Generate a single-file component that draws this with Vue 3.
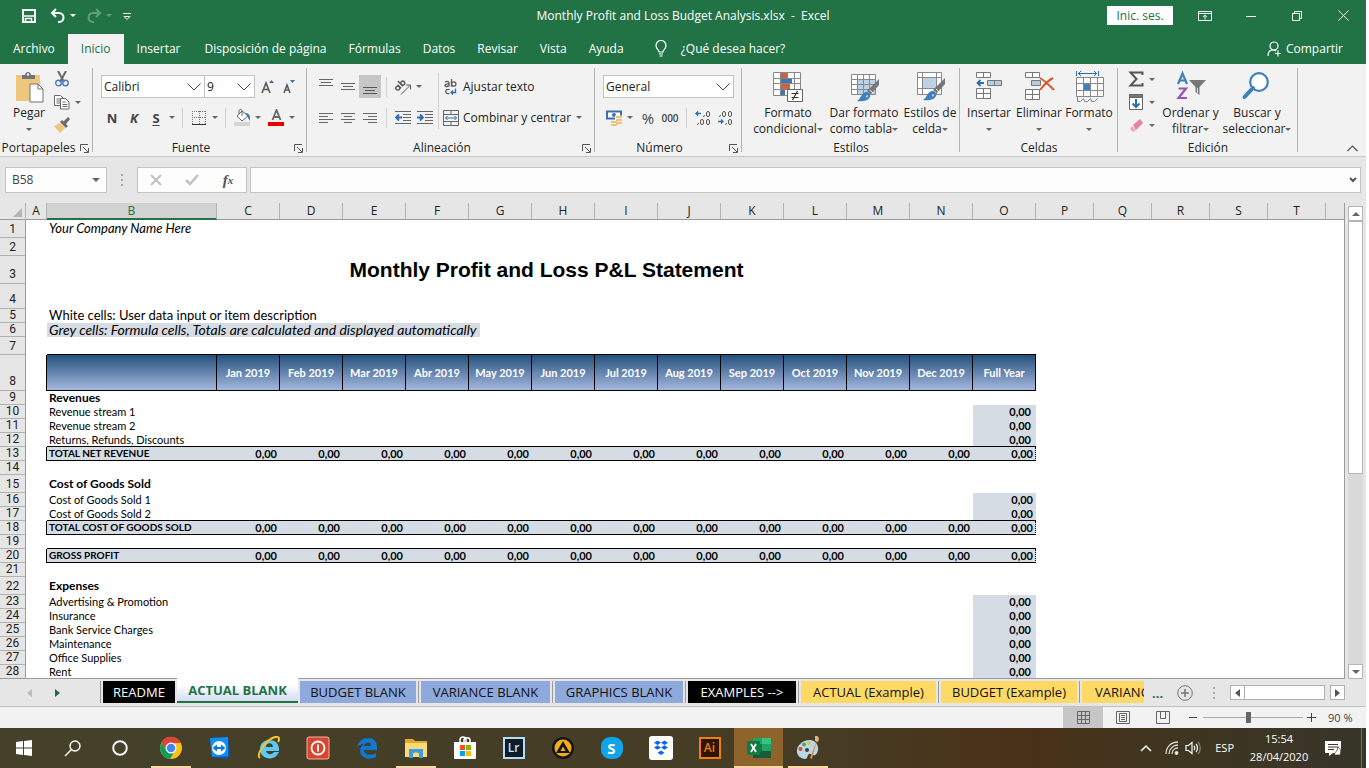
<script setup>
import { ref } from 'vue'

const tabs = ['Archivo', 'Inicio', 'Insertar', 'Disposición de página', 'Fórmulas', 'Datos', 'Revisar', 'Vista', 'Ayuda']
const months = ['Jan', 'Feb', 'Mar', 'Abr', 'May', 'Jun', 'Jul', 'Aug', 'Sep', 'Oct', 'Nov', 'Dec']
const columns = 'ABCDEFGHIJKLMNOPQRST'.split('')

const rows = [
  { n: 1, size: 'h18', kind: 'text', label: 'Your Company Name Here', cls: 'company' },
  { n: 2, size: 'h18' },
  { n: 3, size: 'h28', kind: 'title', label: 'Monthly Profit and Loss P&L Statement' },
  { n: 4, size: 'h25' },
  { n: 5, size: 'h14', kind: 'text', label: 'White cells: User data input or item description', cls: 'note' },
  { n: 6, size: 'h14', kind: 'text', label: 'Grey cells: Formula cells, Totals are calculated and displayed automatically', cls: 'note grey' },
  { n: 7, size: 'h18', kind: 'before' },
  { n: 8, size: 'h36', kind: 'months' },
  { n: 9, size: 'h14', kind: 'head', label: 'Revenues' },
  { n: 10, size: 'h14', kind: 'item', label: 'Revenue stream 1' },
  { n: 11, size: 'h14', kind: 'item', label: 'Revenue stream 2' },
  { n: 12, size: 'h14', kind: 'item', label: 'Returns, Refunds, Discounts', last: true },
  { n: 13, size: 'h14', kind: 'total', label: 'TOTAL NET REVENUE' },
  { n: 14, size: 'h14' },
  { n: 15, size: 'h18', kind: 'head', label: 'Cost of Goods Sold' },
  { n: 16, size: 'h14', kind: 'item', label: 'Cost of Goods Sold 1', wide: true },
  { n: 17, size: 'h14', kind: 'item', label: 'Cost of Goods Sold 2', wide: true, last: true },
  { n: 18, size: 'h14', kind: 'total', label: 'TOTAL COST OF GOODS SOLD' },
  { n: 19, size: 'h14', kind: 'before' },
  { n: 20, size: 'h14', kind: 'total', label: 'GROSS PROFIT' },
  { n: 21, size: 'h14' },
  { n: 22, size: 'h18', kind: 'head', label: 'Expenses' },
  { n: 23, size: 'h14', kind: 'item', label: 'Advertising & Promotion' },
  { n: 24, size: 'h14', kind: 'item', label: 'Insurance' },
  { n: 25, size: 'h14', kind: 'item', label: 'Bank Service Charges' },
  { n: 26, size: 'h14', kind: 'item', label: 'Maintenance' },
  { n: 27, size: 'h14', kind: 'item', label: 'Office Supplies' },
  { n: 28, size: 'h14', kind: 'item', label: 'Rent' }
]

const sheets = [
  { name: 'README', color: 'black', width: 72 },
  { name: 'ACTUAL BLANK', color: 'active', width: 121 },
  { name: 'BUDGET BLANK', color: 'blue', width: 116 },
  { name: 'VARIANCE BLANK', color: 'blue', width: 129 },
  { name: 'GRAPHICS BLANK', color: 'blue', width: 128 },
  { name: 'EXAMPLES -->', color: 'black', width: 108 },
  { name: 'ACTUAL (Example)', color: 'yellow', width: 135 },
  { name: 'BUDGET (Example)', color: 'yellow', width: 136 },
  { name: 'VARIANC', color: 'yellow cut', width: 62 }
]

const zoom = ref(45)
const formula = ref('')
const cellName = ref('B58')
</script>

<template>
  <div class="app">
    <header class="titlebar">
      <div class="quick">
        <button aria-label="Guardar"><svg width="16" height="16" viewBox="0 0 16 16" fill="none" stroke="#fff" stroke-width="2"><path d="M2 2h12v12H2z"/><path d="M3 8h10" stroke-width="1.500"/><path d="M4.500 14v-3.500h6V14" stroke-width="1.500"/></svg></button>
        <button aria-label="Deshacer" class="undo"><svg width="16" height="16" viewBox="0 0 16 16" fill="none" stroke="#fff" stroke-width="2"><path d="M6 1L2 5l4 4M2 5h7c6 0 6 9 0 9H8"/></svg><i class="caret light"></i></button>
        <button aria-label="Rehacer" class="undo dim"><svg width="16" height="16" viewBox="0 0 16 16" fill="none" stroke="#fff" stroke-width="2"><path d="M10 1l4 4-4 4M14 5H7c-6 0-6 9 0 9h1"/></svg><i class="caret light"></i></button>
        <button aria-label="Personalizar"><svg width="10" height="10" viewBox="0 0 10 10" fill="none" stroke="#fff"><path d="M1 2.500h8M2 5.500l3 3 3-3z"/></svg></button>
      </div>
      <h1>Monthly Profit and Loss Budget Analysis.xlsx&nbsp; -&nbsp; Excel</h1>
      <div class="window">
        <button class="signin">Inic. ses.</button>
        <button class="win" aria-label="Opciones de la cinta"><svg width="14" height="12" viewBox="0 0 14 12" fill="none" stroke="#fff"><path d="M.5 1.500h13v9H.5zM.5 3.500h13M7 9.500V5M5 7l2-2 2 2"/></svg></button>
        <button class="win" aria-label="Minimizar"><svg width="10" height="10" viewBox="0 0 10 10" stroke="#fff"><path d="M0 5.500h10"/></svg></button>
        <button class="win" aria-label="Restaurar"><svg width="10" height="10" viewBox="0 0 10 10" fill="none" stroke="#fff"><path d="M.5 2.500h7v7h-7zM2.500 2.500v-2h7v7h-2"/></svg></button>
        <button class="win" aria-label="Cerrar"><svg width="11" height="11" viewBox="0 0 11 11" stroke="#fff"><path d="M.5.5l10 10M10.500.5l-10 10"/></svg></button>
      </div>
    </header>

    <nav class="tabs">
      <button v-for="t in tabs" :key="t" :class="{ on: t === 'Inicio' }">{{ t }}</button>
      <button class="tell"><svg width="12" height="18" viewBox="0 0 12 18" fill="none" stroke="#fff" stroke-width="1.200"><path d="M4 12c0-2-3-3-3-6.500a5 5 0 0 1 10 0C11 9 8 10 8 12zM4 14h4M4.500 16h3"/></svg>¿Qué desea hacer?</button>
      <button class="share"><svg width="15" height="16" viewBox="0 0 15 16" fill="none" stroke="#fff" stroke-width="1.200"><circle cx="7" cy="5" r="4"/><path d="M1 15c0-4 2-6 5-6 1.500 0 2.500.5 3 1M11 9.500v6M8 12.500h6"/></svg>Compartir</button>
    </nav>

    <section class="ribbon">
      <div class="group g-clip">
        <div class="body">
          <button class="large paste">
            <svg width="30" height="32" viewBox="0 0 30 32"><path d="M2 4h24v26H2z" fill="#eec77c"/><path d="M8 8V4h3c0-4 6-4 6 0h4v4z" fill="#737373"/><circle cx="14" cy="3.500" r="1.200" fill="#f2f2f2"/><path d="M16 13h8l5 5v13H16z" fill="#fff" stroke="#737373"/><path d="M24 13v5h5" fill="none" stroke="#737373"/></svg>
            <span>Pegar</span><span><i class="caret"></i></span>
          </button>
          <div class="stack">
            <button aria-label="Cortar"><svg width="16" height="16" viewBox="0 0 16 16" fill="none"><path d="M4 0l6 11M12 0L6 11" stroke="#6a6a6a" stroke-width="2"/><circle cx="4.500" cy="12" r="2.800" stroke="#4a7ebb" stroke-width="1.400"/><circle cx="11.500" cy="12" r="2.800" stroke="#4a7ebb" stroke-width="1.400"/></svg></button>
            <button aria-label="Copiar"><svg width="16" height="16" viewBox="0 0 16 16" fill="#fff" stroke="#6a6a6a"><path d="M.5 1.500h6l3 3v7h-9zM2.500 5h4M2.500 7h4M2.500 9h4"/><path d="M6.500 4.500h5l3.500 3.500v7H6.500zM8.500 8h3M8.500 10.500h5M8.500 12.500h5"/></svg><i class="caret"></i></button>
            <button aria-label="Copiar formato"><svg width="16" height="16" viewBox="0 0 16 16"><path d="M0 9l6-3 5 5-5 5z" fill="#eec77c"/><path d="M6 5l2-2 6 6-2 2zM9 5l5-5 2 2-4 5z" fill="#6a6a6a"/></svg></button>
          </div>
        </div>
        <div class="label">Portapapeles<svg class="launch" width="9" height="9" viewBox="0 0 9 9" fill="none" stroke="#555"><path d="M.5 7V.5H8M3 3l5 5M8.500 4v4.500H4"/></svg></div>
      </div>

      <div class="group g-font">
        <div class="body col">
          <div class="row">
            <span class="pick face"><select aria-label="Fuente"><option>Calibri</option></select><svg width="14" height="8" viewBox="0 0 14 8" fill="none" stroke="#444"><path d="M.5.5L7 7 13.500.5"/></svg></span>
            <span class="pick size"><select aria-label="Tamaño"><option>9</option></select><svg width="14" height="8" viewBox="0 0 14 8" fill="none" stroke="#444"><path d="M.5.5L7 7 13.500.5"/></svg></span>
            <button class="t grow" aria-label="Aumentar tamaño"><svg width="14" height="16" viewBox="0 0 14 16"><path d="M1 14L5 4l4 10M2.500 10.500h5" fill="none" stroke="#595959" stroke-width="1.600"/><path d="M8 4l2.500-3L13 4z" fill="#3d6fae"/></svg></button>
            <button class="t" aria-label="Disminuir tamaño"><svg width="14" height="16" viewBox="0 0 14 16"><path d="M1 14l3-8 3 8M2 11h4" fill="none" stroke="#595959" stroke-width="1.500"/><path d="M7 1h5l-2.500 3z" fill="#3d6fae"/></svg></button>
          </div>
          <div class="row">
            <button class="t bold">N</button><button class="t ital">K</button><button class="t under">S</button><button class="c" aria-label="Subrayado"><i class="caret"></i></button>
            <i class="sep"></i>
            <button class="t" aria-label="Bordes"><svg width="14" height="14" viewBox="0 0 14 14" stroke="#777" stroke-dasharray="1 1"><path d="M0 .5h14M.5 0v13M7.500 0v13M13.500 0v13M0 6.500h14"/><path d="M0 13.500h14" stroke="#333" stroke-dasharray="none"/></svg></button><button class="c" aria-label="Más bordes"><i class="caret"></i></button>
            <i class="sep"></i>
            <button class="t" aria-label="Relleno"><svg width="17" height="17" viewBox="0 0 17 17"><path d="M8 2l6 5-6 5-5-5z" fill="#fff" stroke="#666"/><path d="M8 7V2c0-2-3-2-3 0v3" fill="none" stroke="#666"/><path d="M11 4c4 0 6 3 4.500 8-1-3-2-5-4.500-8z" fill="#3d6fae"/><path d="M0 13h16v4H0z" fill="#d4d4d4"/></svg></button><button class="c" aria-label="Más rellenos"><i class="caret"></i></button>
            <button class="t grow" aria-label="Color de fuente"><svg width="17" height="17" viewBox="0 0 17 17"><path d="M4.500 11L8.500 1l4 10M6 8h5" fill="none" stroke="#666" stroke-width="1.800"/><path d="M0 13h16v4H0z" fill="#e60000"/></svg></button><button class="c" aria-label="Más colores"><i class="caret"></i></button>
          </div>
        </div>
        <div class="label">Fuente<svg class="launch" width="9" height="9" viewBox="0 0 9 9" fill="none" stroke="#555"><path d="M.5 7V.5H8M3 3l5 5M8.500 4v4.500H4"/></svg></div>
      </div>

      <div class="group g-align">
        <div class="body">
          <div class="col">
            <div class="row">
              <button class="t" aria-label="Arriba"><svg width="14" height="16" viewBox="0 0 14 16" stroke="#666"><path d="M0 .5h14M2 3.500h10M0 6.500h14"/></svg></button>
              <button class="t" aria-label="Medio"><svg width="14" height="16" viewBox="0 0 14 16" stroke="#666"><path d="M0 4.500h14M2 7.500h10M0 10.500h14"/></svg></button>
              <button class="t sel" aria-label="Abajo"><svg width="14" height="16" viewBox="0 0 14 16" stroke="#555"><path d="M0 8.500h14M2 11.500h10M0 14.500h14"/></svg></button>
              <i class="sep"></i>
              <button class="t" aria-label="Orientación"><svg width="17" height="16" viewBox="0 0 17 16" fill="none" stroke="#595959"><g transform="rotate(-45 6 8)" stroke-width="1.400"><circle cx="3" cy="6.500" r="2"/><path d="M5.200 4V9M8 1.500V9"/><circle cx="10" cy="6.500" r="2"/></g><path d="M6 15.500L15 6.500M11 6h4.500v4.500"/></svg></button><button class="c" aria-label="Más orientación"><i class="caret"></i></button>
            </div>
            <div class="row">
              <button class="t" aria-label="Izquierda"><svg width="14" height="12" viewBox="0 0 14 12" stroke="#666"><path d="M0 1.500h14M0 4.500h9M0 7.500h14M0 10.500h9"/></svg></button>
              <button class="t" aria-label="Centro"><svg width="14" height="12" viewBox="0 0 14 12" stroke="#666"><path d="M0 1.500h14M3 4.500h8M0 7.500h14M3 10.500h8"/></svg></button>
              <button class="t" aria-label="Derecha"><svg width="14" height="12" viewBox="0 0 14 12" stroke="#666"><path d="M0 1.500h14M5 4.500h9M0 7.500h14M5 10.500h9"/></svg></button>
              <i class="sep"></i>
              <button class="t" aria-label="Disminuir sangría"><svg width="16" height="13" viewBox="0 0 16 13" fill="none" stroke="#666"><path d="M0 .5h16M8 3.500h8M8 6.500h8M8 9.500h8M0 12.500h16"/><path d="M7 6.500H1M4 3.500l-3 3 3 3" stroke="#2f6db3" stroke-width="1.800"/></svg></button>
              <button class="t" aria-label="Aumentar sangría"><svg width="16" height="13" viewBox="0 0 16 13" fill="none" stroke="#666"><path d="M0 .5h16M8 3.500h8M8 6.500h8M8 9.500h8M0 12.500h16"/><path d="M0 6.500h6M3 3.500l3 3-3 3" stroke="#2f6db3" stroke-width="1.800"/></svg></button>
            </div>
          </div>
          <i class="sep tall"></i>
          <div class="col">
            <div class="row">
              <button class="wide"><svg width="16" height="18" viewBox="0 0 16 18" fill="none" stroke="#595959" stroke-width="1.300"><path d="M2 4c2-1 4-.5 4 1v3.500M6 6C1 5.500 1 9 4 8.500c1 0 2-1 2-1M8.500 1v7.500"/><circle cx="10.700" cy="6" r="2.200"/><path d="M6.500 11.500c-5-1.500-5 5.500 0 4"/><path d="M12.500 10.500v4H8M10 12.500l-2 2 2 2" stroke="#2f6db3"/></svg>Ajustar texto</button>
            </div>
            <div class="row">
              <button class="wide"><svg width="16" height="16" viewBox="0 0 16 16" fill="none" stroke="#666"><path d="M.5.5h15v15H.5zM.5 4.500h15M.5 11.500h15M8 .5v4M8 11.500v4"/><path d="M2.500 8h11M4.500 6l-2 2 2 2M11.500 6l2 2-2 2" stroke="#2f6db3"/></svg>Combinar y centrar</button><button class="c" aria-label="Más opciones de combinar"><i class="caret"></i></button>
            </div>
          </div>
        </div>
        <div class="label">Alineación<svg class="launch" width="9" height="9" viewBox="0 0 9 9" fill="none" stroke="#555"><path d="M.5 7V.5H8M3 3l5 5M8.500 4v4.500H4"/></svg></div>
      </div>

      <div class="group g-num">
        <div class="body col">
          <div class="row">
            <span class="pick fmt"><select aria-label="Formato de número"><option>General</option></select><svg width="14" height="8" viewBox="0 0 14 8" fill="none" stroke="#444"><path d="M.5.5L7 7 13.500.5"/></svg></span>
          </div>
          <div class="row">
            <button class="t" aria-label="Moneda"><svg width="17" height="16" viewBox="0 0 17 16"><path d="M1 1.500h14v7H1z" fill="#fff" stroke="#3d6fae" stroke-width="2"/><circle cx="8" cy="5" r="2" fill="#3d6fae"/><path d="M9 5.500h8V16H4v-5h5z" fill="#f2f2f2"/><path d="M10 6h6v2h-6zM10 9h6v2h-6zM10 12h6v2h-6zM5 11h6v2H5zM5 14h6v2H5z" fill="#eec07c"/></svg></button><button class="c" aria-label="Más monedas"><i class="caret"></i></button>
            <button class="t pct">%</button><button class="t mil">000</button>
            <i class="sep"></i>
            <button class="t dec" aria-label="Aumentar decimales"><svg width="16" height="16" viewBox="0 0 16 16" fill="none" stroke="#595959"><path d="M6 3.500H1M3 1.500l-2 2 2 2" stroke="#2f6db3" stroke-width="1.400"/><path d="M9.500 5l-1 2M3.500 13l-1 2"/><rect x="11.500" y="1.500" width="3" height="5" rx="1.500"/><rect x="5.500" y="9.500" width="3" height="5" rx="1.500"/><rect x="11.500" y="9.500" width="3" height="5" rx="1.500"/></svg></button>
            <button class="t dec" aria-label="Disminuir decimales"><svg width="16" height="16" viewBox="0 0 16 16" fill="none" stroke="#595959"><path d="M1 11.500h5M4 9.500l2 2-2 2" stroke="#2f6db3" stroke-width="1.400"/><path d="M3.500 5l-1 2M9.500 13l-1 2"/><rect x="5.500" y="1.500" width="3" height="5" rx="1.500"/><rect x="11.500" y="1.500" width="3" height="5" rx="1.500"/><rect x="11.500" y="9.500" width="3" height="5" rx="1.500"/></svg></button>
          </div>
        </div>
        <div class="label">Número<svg class="launch" width="9" height="9" viewBox="0 0 9 9" fill="none" stroke="#555"><path d="M.5 7V.5H8M3 3l5 5M8.500 4v4.500H4"/></svg></div>
      </div>

      <div class="group g-style">
        <div class="body">
          <button class="large"><svg width="32" height="32" viewBox="0 0 32 32"><path d="M1.500 1.500h27v23h-27z" fill="#fff"/><path d="M9 1.500h7v5.500H9zM9 13h9v5H9z" fill="#d2603f"/><path d="M9 7.500h11v5H9zM9 18.500h4v6H9z" fill="#3f76b5"/><path d="M1.500 1.500h27v23h-27zM8.500 1.500v23M15.500 1.500v5M22.500 1.500v17M1.500 7.500h27M1.500 12.500h27M1.500 18.500h27" fill="none" stroke="#888"/><path d="M15.500 18.500h15v12h-15z" fill="#fff" stroke="#666"/><path d="M19.500 22.500h7M19.500 26.500h7M25.500 20l-5 9" stroke="#333" stroke-width="1.200"/></svg><span>Formato</span><span>condicional<i class="caret"></i></span></button>
          <button class="large"><svg width="32" height="32" viewBox="0 0 32 32"><path d="M3.500 3.500h24v20h-24z" fill="#fff"/><path d="M9.500 8.500h18v15h-18z" fill="#bdd0e6"/><path d="M3.500 3.500h24v20h-24zM9.500 3.500v20M15.500 3.500v20M21.500 3.500v20M3.500 8.500h24M3.500 13.500h24M3.500 18.500h24" fill="none" stroke="#888"/><path d="M31 8v6L23 23l-4-3z" fill="#777"/><path d="M22 19l3 3" stroke="#fff"/><path d="M18 21c3 0 5 2 4 5-2 4-7 5-13 4 4-2 4-8 9-9z" fill="#3f7fbd"/><path d="M18 25l2-1-1 3z" fill="#fff"/></svg><span>Dar formato</span><span>como tabla<i class="caret"></i></span></button>
          <button class="large"><svg width="32" height="32" viewBox="0 0 32 32"><path d="M3.500 1.500h24v22h-24z" fill="#fff"/><path d="M8.500 6.500h14v11h-14z" fill="#bdd0e6"/><path d="M3.500 1.500h24v22h-24zM8.500 1.500v22M22.500 1.500v22M3.500 6.500h24M3.500 17.500h24" fill="none" stroke="#888"/><path d="M31 7v6L23 22l-4-3z" fill="#777"/><path d="M22 18l3 3" stroke="#fff"/><path d="M18 20c3 0 5 2 4 5-2 4-7 5-13 4 4-2 4-8 9-9z" fill="#3f7fbd"/><path d="M18 24l2-1-1 3z" fill="#fff"/></svg><span>Estilos de</span><span>celda<i class="caret"></i></span></button>
        </div>
        <div class="label">Estilos</div>
      </div>

      <div class="group g-cells">
        <div class="body">
          <button class="large"><svg width="32" height="32" viewBox="0 0 32 32" stroke="#777" fill="#fff"><path d="M3.500 1.500h14v5h-14zM10.500 1.500v5M3.500 17.500h14v10h-14zM10.500 17.500v10M3.500 22.500h14"/><path d="M14.500 9.500h14v5h-14zM21.500 9.500v5" fill="#b7cde0"/><path d="M11 12H5M7.500 9L4.500 12l3 3" fill="none" stroke="#2f6db3" stroke-width="1.800"/></svg><span>Insertar</span><span><i class="caret"></i></span></button>
          <button class="large"><svg width="32" height="32" viewBox="0 0 32 32" stroke="#777" fill="#fff"><path d="M2.500 1.500h14v5h-14zM9.500 1.500v5M2.500 18.500h14v10h-14zM9.500 18.500v10M2.500 23.500h14"/><path d="M8.500 9.500h9v5h-9z" fill="#b7cde0"/><path d="M17 7c5 3 10 8 14 12M30 7c-4 2-9 7-13 12" fill="none" stroke="#d9532c" stroke-width="2"/></svg><span>Eliminar</span><span><i class="caret"></i></span></button>
          <button class="large"><svg width="32" height="32" viewBox="0 0 32 32" stroke="#888" fill="#fff"><path d="M3.500 6.500h27v19h-27z"/><path d="M10.500 12.500h7v7h-7z" fill="#3f7fbd"/><path d="M10.500 6.500v19M17.500 6.500v19M24.500 6.500v19M3.500 12.500h27M3.500 19.500h27M4.500 25.500v5h3l3-3 1 3h3l3-3 1 3h3l3-3" fill="none"/><path d="M3.500 0v5M25.500 0v5M5 2.500h19M8 0L5.500 2.500 8 5M21 0l2.500 2.500L21 5" fill="none" stroke="#2f6db3"/></svg><span>Formato</span><span><i class="caret"></i></span></button>
        </div>
        <div class="label">Celdas</div>
      </div>

      <div class="group g-edit">
        <div class="body">
          <div class="stack">
            <button aria-label="Autosuma"><svg width="16" height="16" viewBox="0 0 16 16" fill="none" stroke="#555" stroke-width="2"><path d="M14.500 4V1.500H2.500L8.500 8l-6 6.500h12V12"/></svg><i class="caret"></i></button>
            <button aria-label="Rellenar"><svg width="16" height="16" viewBox="0 0 16 16" fill="#fff" stroke="#666"><path d="M1.500.5h13v15h-13z"/><path d="M1.500.5h13v3h-13z" fill="#777"/><path d="M8 5v8M4.500 9.500L8 13l3.500-3.500" fill="none" stroke="#2f6db3" stroke-width="2"/></svg><i class="caret"></i></button>
            <button aria-label="Borrar"><svg width="16" height="16" viewBox="0 0 16 16"><path d="M5 8l7-6 3 4-7 7z" fill="#e8829b"/><path d="M4 9l4 4-3 2-3-3z" fill="#f0a9b8"/></svg><i class="caret"></i></button>
          </div>
          <button class="large"><svg width="32" height="32" viewBox="0 0 32 32" fill="none"><path d="M3 13L7.500 2.500 12 13M4.500 9.500h6" stroke="#3f7fbd" stroke-width="2.200"/><path d="M3.500 17.500H11L3.500 27H12" stroke="#9455b5" stroke-width="2.200"/><path d="M14 9h17l-6.500 7v8l-4-3v-5z" fill="#777"/><path d="M22.500 17v5" stroke="#ddd"/></svg><span>Ordenar y</span><span>filtrar<i class="caret"></i></span></button>
          <button class="large"><svg width="32" height="32" viewBox="0 0 32 32" fill="none" stroke="#3f7fbd"><circle cx="18" cy="11" r="8.800" fill="#fff" stroke-width="2.200"/><path d="M12 17L3.500 26" stroke-width="4" stroke-linecap="round"/></svg><span>Buscar y</span><span>seleccionar<i class="caret"></i></span></button>
        </div>
        <div class="label">Edición</div>
      </div>
      <button class="collapse" aria-label="Contraer la cinta"><svg width="11" height="7" viewBox="0 0 11 7" fill="none" stroke="#555" stroke-width="1.200"><path d="M.5 6l5-5 5 5"/></svg></button>
    </section>

    <section class="formula">
      <div class="namebox"><input v-model="cellName" aria-label="Cuadro de nombres"><i class="caret big"></i></div>
      <i class="dots"></i>
      <div class="fx">
        <button aria-label="Cancelar"><svg width="12" height="12" viewBox="0 0 12 12" stroke="#c0c0c0" stroke-width="2"><path d="M1 1l10 10M11 1L1 11"/></svg></button>
        <button aria-label="Introducir"><svg width="14" height="12" viewBox="0 0 14 12" fill="none" stroke="#c0c0c0" stroke-width="2.500"><path d="M1 6l4 4 8-9"/></svg></button>
        <button aria-label="Insertar función" class="fn">f<sub>x</sub></button>
      </div>
      <div class="bar"><input v-model="formula" aria-label="Barra de fórmulas"><svg width="8" height="6" viewBox="0 0 8 6" fill="none" stroke="#555" stroke-width="2"><path d="M1 1l3 3 3-3"/></svg></div>
    </section>

    <main class="work">
      <div class="sheet">
        <table>
          <colgroup>
            <col class="w-row"><col class="w-a"><col class="w-b"><col v-for="i in 13" :key="'m' + i" class="w-m"><col v-for="i in 5" :key="'p' + i" class="w-p"><col>
          </colgroup>
          <thead>
            <tr>
              <th class="corner"><svg width="9" height="9" viewBox="0 0 9 9"><path d="M9 0v9H0z" fill="#b5b5b5"/></svg></th>
              <th v-for="c in columns" :key="c" :class="{ picked: c === 'B' }">{{ c }}</th>
              <th></th>
            </tr>
          </thead>
          <tbody>
            <tr v-for="r in rows" :key="r.n" :class="[r.size, r.kind, { roomy: r.wide, last: r.last }]">
              <th>{{ r.n }}</th>
              <td :class="{ edge: r.kind === 'months' || r.kind === 'total' }"></td>
              <td v-if="r.kind === 'text'" colspan="19"><span :class="r.cls">{{ r.label }}</span></td>
              <template v-else-if="r.kind === 'title'"><td colspan="14" class="doc">{{ r.label }}</td><td colspan="6"></td></template>
              <template v-else-if="r.kind === 'months'">
                <td class="mh"></td><td v-for="m in months" :key="m" class="mh">{{ m }} 2019</td><td class="mh">Full Year</td><td colspan="6"></td>
              </template>
              <template v-else-if="r.kind === 'total'">
                <td class="sum name">{{ r.label }}</td><td v-for="m in months" :key="m" class="sum">0,00</td><td class="sum end">0,00</td><td colspan="6"></td>
              </template>
              <template v-else-if="r.kind === 'item'">
                <td class="line">{{ r.label }}</td><td colspan="12" class="line"></td><td class="line full">0,00</td><td colspan="6"></td>
              </template>
              <template v-else><td colspan="14" class="line">{{ r.label }}</td><td colspan="6"></td></template>
            </tr>
          </tbody>
        </table>
      </div>
      <div class="vscroll">
        <button aria-label="Subir"><i class="caret up"></i></button>
        <div class="track"><div class="thumb"></div></div>
        <button aria-label="Bajar"><i class="caret big"></i></button>
      </div>
    </main>

    <nav class="sheets">
      <div class="arrows"><button aria-label="Hoja anterior"><i class="tri left pale"></i></button><button aria-label="Hoja siguiente"><i class="tri right green"></i></button></div>
      <div class="list">
        <div v-for="s in sheets" :key="s.name" class="slot" :class="s.color"><button :style="{ width: s.width + 'px' }">{{ s.name }}</button></div>
      </div>
      <button class="more">...</button>
      <button class="add" aria-label="Hoja nueva"><svg width="16" height="16" viewBox="0 0 16 16" fill="none" stroke="#777"><circle cx="8" cy="8" r="7.300"/><path d="M8 4v8M4 8h8" stroke-width="1.600"/></svg></button>
      <i class="dots"></i>
      <div class="hscroll"><button aria-label="Izquierda"><i class="tri left"></i></button><div class="hthumb"></div><div class="htrack"></div><button aria-label="Derecha"><i class="tri right"></i></button></div>
    </nav>

    <footer class="status">
      <button class="view on" aria-label="Normal"><svg width="13" height="13" viewBox="0 0 13 13" fill="none" stroke="#666"><path d="M.5.5h12v12H.5zM4.500.5v12M8.500.5v12M.5 4.500h12M.5 8.500h12"/></svg></button>
      <button class="view" aria-label="Diseño de página"><svg width="14" height="13" viewBox="0 0 14 13" fill="none" stroke="#666"><path d="M.5.5h13v12H.5zM3.500 2.500h7v8h-7zM5 4.500h4M5 6.500h4M5 8.500h4"/></svg></button>
      <button class="view" aria-label="Salto de página"><svg width="14" height="13" viewBox="0 0 14 13" fill="none" stroke="#666"><path d="M.5.5h13v12H.5zM4.500.5v7h5v-7M9.500 7.500h-5"/></svg></button>
      <button class="z" aria-label="Alejar"><svg width="8" height="9" viewBox="0 0 8 9" stroke="#444"><path d="M0 4.500h8"/></svg></button>
      <input v-model="zoom" type="range" min="0" max="100" aria-label="Zoom">
      <button class="z plus" aria-label="Acercar"><svg width="9" height="9" viewBox="0 0 9 9" stroke="#444"><path d="M0 4.500h9M4.500 0v9"/></svg></button>
      <span class="pctz">90 %</span>
    </footer>

    <footer class="taskbar">
      <button class="s" aria-label="Inicio"><svg width="16" height="16" viewBox="0 0 16 16" fill="#fff"><path d="M0 2l7-1v6.500H0zM8 1l8-1v7.500H8zM0 8.500h7V15l-7-1zM8 8.500h8V16l-8-1z"/></svg></button>
      <button class="s" aria-label="Buscar"><svg width="17" height="17" viewBox="0 0 17 17" fill="none" stroke="#fff" stroke-width="1.400"><circle cx="11" cy="6" r="5"/><path d="M7.500 9.500L1 16"/></svg></button>
      <button class="s" aria-label="Cortana"><svg width="16" height="16" viewBox="0 0 16 16" fill="none" stroke="#f2f2f2" stroke-width="2"><circle cx="8" cy="8" r="6.800"/></svg></button>
      <button class="open first" aria-label="Chrome"><svg width="24" height="24" viewBox="0 0 24 24"><circle cx="12" cy="12" r="11" fill="#fbc116"/><path d="M2.500 6.500A11 11 0 0 1 22 7H12l-5 7z" fill="#db4437"/><path d="M2.500 6.500A11 11 0 0 0 11 23l5-8.500-8.500 0z" fill="#0f9d58"/><circle cx="12" cy="12" r="5.500" fill="#fff"/><circle cx="12" cy="12" r="4.300" fill="#4285f4"/></svg></button>
      <button aria-label="TeamViewer"><svg width="24" height="24" viewBox="0 0 24 24"><path d="M2 2l18-1 2 19-3 3-15-2z" fill="#0a57bd"/><path d="M2 2l18-1v19L4 21z" fill="#138ff0"/><circle cx="11" cy="12" r="7" fill="#eef8ff"/><path d="M4.500 12L9 8.500V11h4V8.500L17.500 12 13 15.500V13H9v2.500z" fill="#1977cf"/></svg></button>
      <button aria-label="Internet Explorer"><svg width="24" height="24" viewBox="0 0 24 24"><path d="M3 13C3 1 22 1 22 13v2H9c1 4 6 4 8 1h5c-4 10-19 8-19-3zm6-2h7c0-5-7-5-7 0z" fill="#5cc8f4"/><path d="M3 22C-1 19 8 4 18 1c4-1 5 2 3 5" fill="none" stroke="#f6c52b" stroke-width="2"/></svg></button>
      <button aria-label="Apagar"><svg width="24" height="24" viewBox="0 0 24 24" fill="none"><rect x="1" y="1" width="22" height="22" rx="2" fill="#d9452c" stroke="#f2b4a4"/><circle cx="12" cy="12" r="6.500" stroke="#fff" stroke-width="1.800"/><path d="M12 8.500v7" stroke="#fff" stroke-width="1.800"/></svg></button>
      <button aria-label="Edge"><svg width="24" height="24" viewBox="0 0 24 24"><path d="M2 11C4 0 22-2 22 11v3H9c0 5 7 6 12 3v4C11 26 2 19 6 11c1-2 3-3 4-3-5 0-7 2-8 3zm7-1h7c0-5-6-4-7 0z" fill="#0f78d4"/></svg></button>
      <button class="open" aria-label="Explorador"><svg width="24" height="24" viewBox="0 0 24 24"><path d="M1 3h8l2 2h12v16H1z" fill="#e3a82c"/><path d="M1 7h22v14H1z" fill="#fddb77"/><path d="M5 22v-9h14v9h-4v-4c0-2-6-2-6 0v4z" fill="#3f9ade"/></svg></button>
      <button aria-label="Store"><svg width="24" height="24" viewBox="0 0 24 24"><path d="M7 8V4c0-4 6-4 6 0v3M11 7V4c0-3 6-3 6 0v4" fill="none" stroke="#fff" stroke-width="1.500"/><path d="M1 6h22v16q0 1-1 1H2q-1 0-1-1z" fill="#fff"/><path d="M7 9h5v5H7z" fill="#f25022"/><path d="M13 9h5v5h-5z" fill="#7fba00"/><path d="M7 15h5v5H7z" fill="#00a4ef"/><path d="M13 15h5v5h-5z" fill="#ffb900"/></svg></button>
      <button aria-label="Lightroom"><span class="adobe lr">Lr</span></button>
      <button aria-label="AIMP"><svg width="24" height="24" viewBox="0 0 24 24"><circle cx="12" cy="12" r="11" fill="#161616"/><circle cx="12" cy="12" r="8.500" fill="#f5ad1c"/><path d="M12 5l7 12H5zM12 10.500L9.500 15h5z" fill="#161616" fill-rule="evenodd"/></svg></button>
      <button aria-label="Skype"><span class="skype">S</span></button>
      <button aria-label="Dropbox"><svg width="24" height="24" viewBox="0 0 24 24"><rect width="24" height="24" rx="3" fill="#fff"/><path d="M8.500 4.500l3.500 2.300-3.500 2.300L5 6.800zM15.500 4.500L19 6.800l-3.500 2.300L12 6.800zM8.500 9.200l3.500 2.300-3.500 2.300L5 11.500zM15.500 9.200l3.500 2.300-3.500 2.300-3.500-2.300zM12 14.500l3.500 2.300-3.500 2.300-3.500-2.300z" fill="#0f62fe"/></svg></button>
      <button aria-label="Illustrator"><span class="adobe ai">Ai</span></button>
      <button class="open cur" aria-label="Excel"><svg width="24" height="24" viewBox="0 0 24 24"><path d="M6 2h18v20H6z" fill="#21a366"/><path d="M15 2h9v6h-9z" fill="#33c481"/><path d="M6 8h9v7H6z" fill="#107c41"/><path d="M6 15h18v7H6z" fill="#185c37"/><path d="M15 8h9v7h-9z" fill="#21a366"/><rect y="5" width="13" height="14" rx="1" fill="#107c41"/><path d="M4 8l5 8M9 8l-5 8" stroke="#fff" stroke-width="1.800"/></svg></button>
      <button class="open" aria-label="Paint"><svg width="24" height="24" viewBox="0 0 24 24"><path d="M1 16C0 9 8 3 15 4c6 1 9 8 6 13-3 5-6 0-8 1s-1 5-4 5-8-3-8-7z" fill="#b9d7e8"/><circle cx="4.500" cy="13" r="2" fill="#d8453c"/><circle cx="8" cy="8.500" r="2" fill="#58a847"/><circle cx="13" cy="7" r="2" fill="#e9bf3c"/><circle cx="11" cy="14" r="2" fill="#45412a"/><path d="M21 4l-5 19-2-1z" fill="#d88b3f"/><path d="M19 0c3-1 5 2 3 6l-3-1z" fill="#e1b27d"/></svg></button>
      <div class="tray">
        <button aria-label="Iconos ocultos"><svg width="12" height="8" viewBox="0 0 12 8" fill="none" stroke="#fff" stroke-width="1.500"><path d="M1 7l5-5 5 5"/></svg></button>
        <button aria-label="Red"><svg width="14" height="14" viewBox="0 0 14 14" fill="none" stroke="#ddd" stroke-width="1.300"><path d="M1 13C1 6 6 1 13 1M4 13c0-5 4-9 9-9M7 13c0-4 3-6 6-6"/><circle cx="11.500" cy="12" r="1.300" fill="#fff"/></svg></button>
        <button aria-label="Volumen"><svg width="16" height="14" viewBox="0 0 16 14" fill="none" stroke="#fff" stroke-width="1.200"><path d="M1 4.500h2.500L7 1.500v11L3.500 9.500H1zM9 5c1 1 1 3 0 4M11 3c2 2 2 6 0 8"/><path d="M13 1c3 3 3 9 0 12" stroke="#888"/></svg></button>
        <button class="lang">ESP</button>
        <button class="clock"><span>15:54</span><span>28/04/2020</span></button>
        <button class="notes" aria-label="Notificaciones"><svg width="17" height="17" viewBox="0 0 17 17"><path d="M0 1h16v12H8l-4 3v-3H0z" fill="#fff"/><path d="M3 4.500h10M3 7h10M3 9.500h6" stroke="#3d3824"/><path d="M13 7c3 1 3 6 2 8h-5c-2-2 2-2 3-8z" fill="#fff" stroke="#3d3824" stroke-width=".8"/></svg></button>
      </div>
    </footer>
  </div>
</template>

<style>
body { margin: 0; background: #fff; }
</style>

<style scoped>
* { box-sizing: border-box; }
.app { display: flex; flex-direction: column; height: 100vh; margin-right: 3px; overflow: hidden; font-family: "Open Sans", "Noto Sans", sans-serif; font-size: 12px; line-height: 16px; color: #222; background: #e6e6e6; }
button { display: flex; align-items: center; justify-content: center; margin: 0; padding: 0; border: 0; background: none; color: inherit; font: inherit; white-space: nowrap; flex: none; }
svg { flex: none; display: block; }
input, select { font: inherit; color: inherit; margin: 0; border: 0; outline: 0; background: none; appearance: none; min-width: 0; }

.caret { display: inline-block; flex: none; width: 0; height: 0; border: 3px solid transparent; border-top-color: #666; border-bottom: 0; vertical-align: 2px; }
.caret.big { border-width: 4px; border-bottom: 0; }
.caret.up { border-top: 0; border-bottom: 4px solid #666; border-left-width: 4px; border-right-width: 4px; }
.caret.light { border-top-color: #fff; }
.tri { width: 0; height: 0; border: 4px solid transparent; }
.tri.left { border-left: 0; border-right: 5px solid #555; }
.tri.right { border-right: 0; border-left: 5px solid #555; }
.tri.pale { border-right-color: #bbb; }
.tri.green { border-left-color: #1c6b41; }
.dots { width: 2px; height: 12px; background: repeating-linear-gradient(#aaa 0 2px, transparent 2px 5px); }

.titlebar { display: grid; grid-template-columns: 1fr auto 1fr; align-items: center; flex: none; height: 34px; padding-bottom: 3px; background: #217346; color: #fff; }
.quick { display: flex; gap: 10px; padding-left: 21px; }
.quick button:nth-child(2) { margin-left: 3px; }
.undo { gap: 4px; }
.dim { opacity: .3; }
h1 { margin: 0; font-size: 12px; font-weight: 400; }
.window { display: flex; align-items: center; justify-content: flex-end; }
.signin { width: 66px; height: 19px; margin-right: 9px; background: #fff; color: #217346; }
.win { width: 46px; height: 30px; }

.tabs { display: flex; flex: none; height: 30px; background: #217346; color: #fff; }
.tabs button { padding: 0 11px; }
.tabs button:nth-child(-n+3) { padding: 0 13px; }
.tabs .on { background: #f2f2f2; color: #217346; }
.tabs .tell { gap: 14px; padding-left: 20px; }
.tabs .share { gap: 4px; margin-left: auto; padding-right: 23px; }

.ribbon { display: flex; flex: none; height: 93px; background: #f2f2f2; border-bottom: 1px solid #c8c8c8; }
.group { position: relative; display: flex; flex-direction: column; flex: none; padding-top: 7px; }
.group::after { content: ""; position: absolute; right: 0; top: 4px; bottom: 4px; width: 1px; background: #b4b4b4; }
.body { display: flex; height: 68px; }
.col { display: flex; flex-direction: column; }
.row { display: flex; align-items: center; height: 31px; }
.label { position: relative; height: 17px; line-height: 18px; text-align: center; }
.launch { position: absolute; right: 4px; top: 5px; }
.g-clip { width: 93px; }
.g-clip .label { padding-right: 16px; }
.g-font { width: 214px; }
.g-font .body, .g-align .body, .g-num .body { padding-left: 8px; }
.g-font .label { padding-right: 18px; }
.g-align { width: 288px; }
.g-align .label { padding-right: 18px; }
.g-num { width: 147px; }
.g-num .label { padding-right: 18px; }
.g-style { width: 218px; }
.g-style .body { padding-left: 8px; }
.g-cells { width: 158px; }
.g-cells .body { padding-left: 4px; }
.g-edit { width: 180px; }
.g-edit .body { padding-left: 10px; }

.large { flex-direction: column; justify-content: flex-start; }
.large span { height: 16px; }
.large svg { margin-bottom: 2px; }
.large .caret { margin-left: 3px; }
.large span .caret:first-child { margin-left: 0; }
.paste { width: 54px; padding-left: 4px; }
.g-style .large { width: 76px; }
.g-style .large:last-child { width: 56px; }
.g-cells .large { width: 50px; }
.g-edit .large { width: 61px; }
.g-edit .large:last-child { width: 72px; }
.stack { display: flex; flex-direction: column; gap: 7px; }
.stack button { justify-content: flex-start; gap: 5px; }
.g-edit .stack { width: 32px; }
.t { width: 22px; height: 23px; }
.c { width: 10px; height: 23px; }
.sep { flex: none; width: 1px; height: 20px; margin: 0 5px; background: #d0d0d0; }
.tall { height: 56px; margin: 2px 4px 0 13px; }
.g-align .col:first-child { width: 110px; }
.sel { background: #c6c6c6; }
.grow { margin-left: 2px; }
.bold { font-weight: 700; font-size: 13px; color: #444; }
.ital { font-weight: 700; font-style: italic; font-size: 13px; color: #444; }
.under { font-weight: 700; text-decoration: underline; text-underline-offset: 2px; font-size: 13px; color: #444; }
.pct { margin-left: 2px; font-size: 15px; color: #444; }
.mil { font-size: 10px; font-weight: 600; color: #444; }
.wide { gap: 4px; }
.wide + .c { margin-left: 3px; }
.pick { position: relative; display: flex; height: 23px; border: 1px solid #c3c3c3; background: #fff; }
.pick select { width: 100%; padding: 0 2px; }
.pick svg { position: absolute; right: 3px; top: 7px; pointer-events: none; }
.face { width: 104px; }
.size { width: 50px; border-left: 0; }
.fmt { width: 131px; }
.collapse { margin: auto 8px 4px auto; }

.formula { display: flex; align-items: center; flex: none; height: 46px; padding: 0 5px; }
.namebox, .fx, .bar { display: flex; align-items: center; height: 26px; border: 1px solid #c3c3c3; background: #fdfdfd; }
.namebox { width: 102px; padding: 0 6px; margin-right: 14px; }
.namebox input { flex: 1; padding: 0; color: #444; }
.fx { width: 110px; margin: 0 3px 0 14px; }
.fx button { flex: 1; }
.fn { font-family: "Liberation Serif", serif; font-style: italic; font-weight: 700; font-size: 15px; color: #555; }
.fn sub { font-size: 11px; vertical-align: 0; }
.bar { flex: 1; padding-right: 3px; }
.bar input { flex: 1; }

.work { display: flex; flex: 1; min-height: 0; }
.sheet { flex: 1; min-width: 0; overflow: hidden; border-right: 1px solid #9b9b9b; border-bottom: 1px solid #9b9b9b; background: linear-gradient(#e6e6e6 16px, #fff 16px); }
table { width: 100%; table-layout: fixed; border-collapse: separate; border-spacing: 0; font-family: Lato, "Open Sans", sans-serif; color: #000; }
th, td { padding: 0; border: 0; white-space: nowrap; font-weight: 400; }
.w-row { width: 26px; }
.w-a { width: 21px; }
.w-b { width: 170px; }
.w-m { width: 63px; }
.w-p { width: 58px; }
thead th { height: 17px; border-right: 1px solid #b1b1b1; border-bottom: 1px solid #9b9b9b; background: #e6e6e6; font-family: "Open Sans", sans-serif; font-size: 12px; line-height: 14px; color: #222; }
thead th:last-child { border-right: 0; }
thead .picked { background: #d2d2d2; border-bottom: 2px solid #217346; color: #217346; }
.corner svg { margin: 2px 3px 0 auto; }
tbody th { background: #e6e6e6; border-right: 1px solid #9b9b9b; border-bottom: 1px solid #b1b1b1; font-family: Roboto, sans-serif; font-size: 12px; line-height: 13px; vertical-align: bottom; color: #222; }
td { font-size: 11px; line-height: 13px; vertical-align: bottom; }
.h14 > * { height: 14px; }
.h18 > * { height: 18px; }
.h25 > * { height: 25px; }
.h28 > * { height: 28px; }
.h36 > * { height: 36px; }
.h18 > th { padding-bottom: 1px; }
.h18 > td { padding-bottom: 3px; }
.h25 > th, .h28 > th, .h36 > th { padding-bottom: 2px; }
.line, .name, .company { padding-left: 2px; }
.company { font-style: italic; font-size: 13px; }
.note { display: inline-block; padding-left: 2px; font-size: 13px; height: 14px; line-height: 13px; vertical-align: top; }
.grey { padding-right: 3px; font-size: 14px; font-style: italic; background: #d6dce4; }
.doc { padding-left: 10px; text-align: center; font: 700 21px/26px "Liberation Sans", Arial, sans-serif; vertical-align: middle; }
.head td { font-size: 12px; font-weight: 700; }
.h14 > .line { padding-bottom: 1px; }
.before > .line, .last > .line { padding-bottom: 0; border-bottom: 1px solid #000; }
.edge { border-right: 1px solid #000; }
.mh { border-right: 1px solid #000; border-bottom: 1px solid #000; background: linear-gradient(#24507d, #a5b8de); color: #fff; font-size: 11px; font-weight: 700; text-align: center; vertical-align: middle; }
.sum { padding-right: 3px; border-bottom: 1px solid #000; background: #d6dce4; font-weight: 700; text-align: right; line-height: 13px; }
.sum.name { font-size: 10px; text-align: left; }
.end { border-right: 1px dotted #000; padding-right: 2px; }
.full { padding-right: 5px; background: #d6dce4; font-weight: 700; text-align: right; }
.roomy .full { padding-right: 3px; }

.vscroll { display: flex; flex-direction: column; flex: none; width: 21px; padding: 3px 3px 0; }
.vscroll button { height: 15px; border: 1px solid #b5b5b5; background: #fff; }
.track { flex: 1; background: #dadada; }
.thumb { height: 57%; border: 1px solid #b5b5b5; background: #fff; }

.sheets { display: flex; align-items: center; flex: none; height: 28px; border-bottom: 1px solid #c0c0c0; }
.arrows { display: flex; gap: 23px; width: 100px; padding-left: 27px; }
.list { display: flex; align-self: stretch; flex: none; padding-top: 2px; }
.slot { display: flex; align-items: flex-start; padding: 0 2px; border-left: 1px solid #9b9b9b; height: 22px; }
.slot button { height: 22px; padding-bottom: 1px; font-size: 13px; color: #111; overflow: hidden; }
.slot.black button { background: #000; color: #fff; }
.slot.blue button { background: #8ea9db; }
.slot.yellow button { background: #ffd966; }
.slot.cut { padding-right: 0; }
.slot.cut button { justify-content: flex-start; padding-left: 13px; }
.slot.active { height: 25px; margin-top: -3px; padding: 0; border: 0; }
.slot.active button { height: 25px; padding-bottom: 0; background: linear-gradient(#fff 30%, #d3dcf0); border-bottom: 2px solid #217346; color: #217346; font-weight: 700; }
.slot.active + .slot { border-left: 0; }
.more { margin-left: 8px; color: #217346; font-weight: 700; font-size: 13px; height: 20px; }
.add { margin: 0 20px 0 14px; }
.hscroll { display: flex; flex: none; width: 115px; height: 15px; margin: 0 21px 0 auto; }
.hscroll button { width: 15px; border: 1px solid #b0b0b0; background: #fff; }
.hthumb { width: 80px; border: 1px solid #b0b0b0; border-left: 0; background: #fff; }
.htrack { flex: 1; }

.status { display: flex; align-items: center; justify-content: flex-end; flex: none; height: 21px; background: #f2f2f2; }
.view { width: 40px; height: 21px; }
.view.on { background: #c6c6c6; }
.z { width: 20px; height: 20px; }
.plus { width: 17px; }
.status input { width: 100px; height: 12px; background: linear-gradient(#aaa, #aaa) center / 100% 1px no-repeat; }
.status input::-webkit-slider-thumb { appearance: none; width: 5px; height: 11px; background: #666; }
.pctz { width: 46px; padding-left: 8px; font-size: 11px; color: #444; }

.taskbar { display: flex; flex: none; height: 40px; color: #fff; background: linear-gradient(90deg, #45412a 0, #463c24 60%, #4a3118 75%, #40351f 85%, #38362a 100%); }
.taskbar > button { position: relative; width: 49px; }
.taskbar > .s { width: 48px; }
.taskbar > .first { margin-left: 2px; }
.open::after { content: ""; position: absolute; left: 5px; right: 4px; bottom: 0; height: 2px; background: #fbd7a5; }
.cur { background: #8f642c; }
.cur::after { left: 0; right: 0; }
.adobe { width: 22px; height: 22px; border: 2px solid #b4dcf2; background: #0d1c26; color: #c4e3f4; font-size: 12px; line-height: 17px; font-weight: 600; }
.ai { border-color: #f07f13; background: #2e1501; color: #f07f13; }
.skype { width: 22px; height: 22px; border-radius: 9px; background: #10a5e8; font-size: 15px; line-height: 22px; font-weight: 700; }
.tray { display: flex; align-items: center; margin-left: auto; border-right: 1px solid #77745f; margin-right: 4px; }
.tray button { height: 40px; }
.tray button:nth-child(2) { margin-left: 13px; }
.tray button:nth-child(3) { margin-left: 6px; }
.lang { margin-left: 14px; font-size: 11px; }
.clock { flex-direction: column; width: 90px; font-size: 11px; line-height: 18px; }
.notes { margin: 0 19px 0 1px; }
</style>
